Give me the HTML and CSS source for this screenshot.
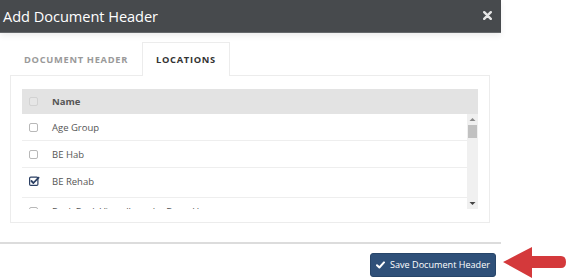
FILE: index.html
```html
<!DOCTYPE html>
<html>
<head>
<meta charset="utf-8">
<link rel="stylesheet" href="styles.css">
</head>
<body>
<div class="modal">
  <div class="modal-header">
    <span class="title">Add Document Header</span>
    <svg class="close" width="9" height="9" viewBox="0 0 9 9"><path d="M1.2 1.2 L7.8 7.8 M7.8 1.2 L1.2 7.8" stroke="#e6e6e6" stroke-width="2.4" stroke-linecap="round"/></svg>
  </div>
  <div class="modal-body">
    <div class="tabs">
      <div class="tab">DOCUMENT HEADER</div>
      <div class="tab active">LOCATIONS</div>
    </div>
    <div class="panel">
      <div class="table">
        <div class="thead">
          <span class="cb cb-head"></span>
          <span class="th">Name</span>
        </div>
        <div class="tbody">
          <div class="rows">
            <div class="row"><span class="cb"></span><span class="td">Age Group</span></div>
            <div class="row"><span class="cb"></span><span class="td">BE Hab</span></div>
            <div class="row row-tall">
              <svg class="cb-checked" width="11" height="10" viewBox="0 0 11 10"><rect x="0.6" y="1.1" width="8.3" height="8.3" rx="1.2" fill="none" stroke="#2b3f63" stroke-width="1.2"/><path d="M2.4 5 L4.4 7 L9.6 1.6" fill="none" stroke="#2b3f63" stroke-width="1.8" stroke-linecap="round" stroke-linejoin="round"/></svg>
              <span class="td">BE Rehab</span>
            </div>
            <div class="row"><span class="cb"></span><span class="td">Bock Bock Virtually at the Dogo House</span></div>
          </div>
          <div class="scrollbar">
            <div class="sb-btn"><svg width="7" height="5" viewBox="0 0 7 5"><path d="M0.5 4 L3.5 1 L6.5 4 Z" fill="#8a8a8a"/></svg></div>
            <div class="sb-thumb"></div>
            <div class="sb-space"></div>
            <div class="sb-btn"><svg width="7" height="5" viewBox="0 0 7 5"><path d="M0.5 1 L3.5 4 L6.5 1 Z" fill="#444"/></svg></div>
          </div>
        </div>
      </div>
    </div>
  </div>
  <div class="modal-footer">
    <button class="btn-save">
      <svg width="9" height="8" viewBox="0 0 9 8"><path d="M1 4.2 L3.4 6.5 L8 1.4" fill="none" stroke="#fff" stroke-width="2" stroke-linecap="round" stroke-linejoin="round"/></svg>
      <span>Save Document Header</span>
    </button>
  </div>
</div>
<svg class="arrow" width="64" height="33" viewBox="0 0 64 33"><path d="M0 17 L29 2 L29 11 L58 11 Q63 11 63 17 Q63 23 58 23 L29 23 L29 33 Z" fill="#d4393b"/></svg>
</body>
</html>
```
FILE: styles.css
```css
* { box-sizing: border-box; }
html, body { margin: 0; padding: 0; background: #fff; }
body {
  width: 569px;
  height: 278px;
  overflow: hidden;
  font-family: "Open Sans", "Liberation Sans", sans-serif;
  position: relative;
}
.modal { width: 501px; }
.modal-header {
  height: 33px;
  background: #474a4d;
  border-bottom: 1px solid #65686b;
  box-shadow: 0 3px 6px rgba(0,0,0,0.07);
  display: flex;
  align-items: center;
  justify-content: space-between;
  padding: 0 9px 1px 3px;
}
.title {
  color: #fff;
  font-size: 14.6px;
  letter-spacing: -0.05px;
}
.close { display: block; margin-top: -1px; }
.modal-body { padding: 9px 11px 0 10px; }
.tabs { display: flex; }
.tab {
  height: 33px;
  padding: 0 13px;
  display: flex;
  align-items: center;
  font-size: 9.3px;
  font-weight: 700;
  letter-spacing: 0.7px;
  color: #9a9a9a;
  border: 1px solid transparent;
  border-bottom: none;
}
.tab.active {
  color: #333;
  border-color: #ececec;
  background: #fff;
  position: relative;
  margin-bottom: -1px;
  height: 34px;
}
.panel {
  border: 1px solid #ececec;
  height: 148px;
  padding: 13px 12px 0 11px;
}
.table { width: 456px; }
.thead {
  height: 25px;
  background: #e3e3e3;
  display: flex;
  align-items: center;
  padding-left: 7px;
}
.th {
  font-size: 9.5px;
  font-weight: 700;
  color: #555;
  margin-left: 14px;
}
.tbody {
  display: flex;
  height: 95px;
  overflow: hidden;
}
.rows { flex: 1; overflow: hidden; }
.row {
  height: 27px;
  border-bottom: 1px solid #eeeeee;
  display: flex;
  align-items: center;
  padding-left: 7px;
}
.row-tall { height: 30px; padding-bottom: 3px; }
.cb {
  width: 9px;
  height: 9px;
  border: 1px solid #b8b8b8;
  border-radius: 2px;
  background: #fff;
  flex: none;
}
.cb-head { border-color: #d2d2d2; background: #e6e6e6; }
.cb-checked { flex: none; display: block; margin-right: -2px; }
.td {
  font-size: 9.5px;
  color: #555;
  margin-left: 14px;
  white-space: nowrap;
}
.scrollbar {
  width: 11px;
  background: #f0f0f0;
  display: flex;
  flex-direction: column;
}
.sb-btn {
  height: 11px;
  display: flex;
  align-items: center;
  justify-content: center;
}
.sb-thumb {
  height: 13px;
  margin: 0 1px;
  background: #c1c1c1;
}
.sb-space { flex: 1; }
.modal-footer {
  margin-top: 19px;
  border-top: 2px solid #dcdcdc;
  display: flex;
  justify-content: flex-end;
  padding: 9px 5px 0 0;
}
.btn-save {
  width: 126px;
  height: 24px;
  background: #2f5079;
  border: 1px solid #274569;
  border-radius: 3px;
  color: #fff;
  font-family: "Open Sans", "Liberation Sans", sans-serif;
  font-size: 9.1px;
  display: flex;
  align-items: center;
  justify-content: center;
  gap: 5px;
  padding: 0 0 1px 0;
}
.btn-save svg { display: block; }
.arrow {
  position: absolute;
  left: 503px;
  top: 245px;
}
```
